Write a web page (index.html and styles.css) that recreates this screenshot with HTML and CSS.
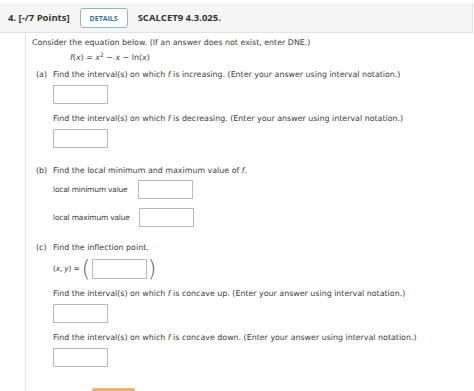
FILE: index.html
```html
<!DOCTYPE html>
<html lang="en">
<head>
  <meta charset="UTF-8" />
  <title>Question 4</title>
  <link rel="stylesheet" href="styles.css">
</head>
<body>
  <div class="header">
    <span class="points">4. [-/7 Points]</span>
    <span class="details">DETAILS</span>
    <span class="code">SCALCET9 4.3.025.</span>
  </div>

  <div class="main">
    <div class="content">
      <p class="intro">Consider the equation below. (If an answer does not exist, enter DNE.)</p>
      <p class="formula"><i>f</i>(<i>x</i>) = <i>x</i><sup>2</sup> &minus; <i>x</i> &minus; ln(<i>x</i>)</p>

      <div class="part part-a">
        <p class="ask"><span class="tag">(a)</span>Find the interval(s) on which <i>f</i> is increasing. (Enter your answer using interval notation.)</p>
        <div class="sub">
          <div class="box"></div>
          <p class="line">Find the interval(s) on which <i>f</i> is decreasing. (Enter your answer using interval notation.)</p>
          <div class="box"></div>
        </div>
      </div>

      <div class="part part-b">
        <p class="ask"><span class="tag">(b)</span>Find the local minimum and maximum value of <i>f</i>.</p>
        <div class="sub">
          <div class="field field-min">
            <span class="label">local minimum value</span>
            <div class="box"></div>
          </div>
          <div class="field field-max">
            <span class="label">local maximum value</span>
            <div class="box"></div>
          </div>
        </div>
      </div>

      <div class="part part-c">
        <p class="ask"><span class="tag">(c)</span>Find the inflection point.</p>
        <div class="sub">
          <div class="point">
            <span class="label">(<i>x</i>, <i>y</i>) =</span>
            <span class="paren">(</span>
            <div class="box"></div>
            <span class="paren">)</span>
          </div>
          <p class="line">Find the interval(s) on which <i>f</i> is concave up. (Enter your answer using interval notation.)</p>
          <div class="box"></div>
          <p class="line">Find the interval(s) on which <i>f</i> is concave down. (Enter your answer using interval notation.)</p>
          <div class="box"></div>
        </div>
      </div>

      <div class="submit"></div>
    </div>
  </div>
</body>
</html>
```

FILE: styles.css
```css
body {
  margin: 0;
  font-family: "DejaVu Sans", Verdana, sans-serif;
  color: #3d3d3d;
  background: #fff;
  height: 391px;
  overflow: hidden;
}

p {
  margin: 0;
}

.header {
  height: 29px;
  margin-top: 3px;
  background: #f5f5f5;
  border-bottom: 1px solid #e2e2e2;
  border-right: 1px solid #e2e2e2;
  margin-right: 1px;
  display: flex;
  align-items: center;
  padding-left: 8px;
  font-family: "Open Sans", sans-serif;
  font-weight: 700;
  font-size: 9.5px;
  color: #333;
}

.details {
  margin-left: 10px;
  width: 46px;
  height: 18px;
  border: 1px solid #8db6d3;
  border-radius: 3px;
  background: #fff;
  color: #36729e;
  font-size: 7px;
  display: flex;
  align-items: center;
  justify-content: center;
  margin-top: 1px;
}

.code {
  margin-left: 10px;
}

.main {
  margin-left: 25px;
  border-left: 1px solid #e2e2e2;
  height: 359px;
}

.content {
  padding: 5px 0 0 6px;
  font-size: 7.9px;
  line-height: 10px;
}

.formula {
  margin: 5px 0 0 38px;
}

.formula sup {
  font-size: 6px;
  line-height: 0;
  vertical-align: 3px;
}

.part {
  padding-left: 4px;
}

.tag {
  display: inline-block;
  width: 17px;
}

.sub {
  padding-left: 17px;
}

.box {
  width: 53px;
  height: 17px;
  border: 1px solid #b9b9b9;
  background: #fff;
}

.line {
  margin-top: 10px;
}

.sub > .box {
  margin-top: 5px;
}

.part-a {
  margin-top: 7px;
}

.part-b {
  margin-top: 18px;
}

.field {
  display: flex;
  align-items: center;
  margin-top: 4px;
}

.label {
  font-size: 7.5px;
  letter-spacing: -0.2px;
  white-space: nowrap;
}

.field .label {
  width: 85px;
}

.field-max {
  margin-top: 9px;
}

.field-max .label {
  width: 86px;
}

.part-c {
  margin-top: 16px;
}

.point {
  display: flex;
  align-items: center;
  height: 22px;
  margin-top: 5px;
}

.point .label {
  margin-right: 2px;
}

.point .box {
  height: 18px;
  margin: 0 1px;
}

.paren {
  font-size: 23px;
  line-height: 22px;
  font-weight: 200;
  color: #666;
}

.part-c .point + .line {
  margin-top: 9px;
}

.submit {
  width: 43px;
  height: 10px;
  margin: 21px 0 0 60px;
  background: #ecb07a;
  border-radius: 2px;
}
```
